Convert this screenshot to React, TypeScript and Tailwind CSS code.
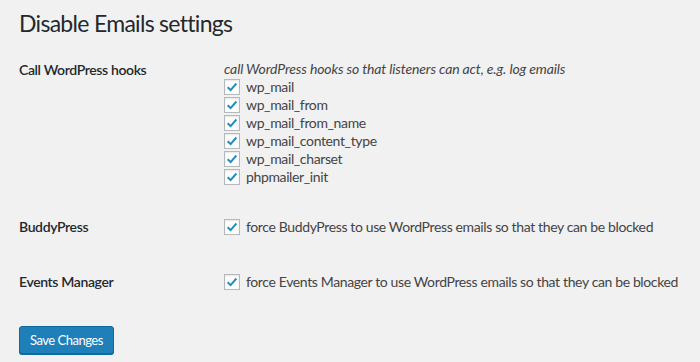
import type { ReactNode } from 'react'

const HOOKS = ['wp_mail', 'wp_mail_from', 'wp_mail_from_name', 'wp_mail_content_type', 'wp_mail_charset', 'phpmailer_init']

function Check() {
  return (
    <span className="w-4 h-4 shrink-0 border border-[#b4b9be] bg-[#fefefe] shadow-[inset_0_1px_2px_rgba(0,0,0,0.1)] flex items-center justify-center">
      <svg viewBox="0 0 16 16" className="w-[14px] h-[14px]">
        <path d="M3 8.3 L6.4 11.5 L13 4" fill="none" stroke="#1e8cbe" strokeWidth="2.2" />
      </svg>
    </span>
  )
}

function CheckRow({ children }: { children: ReactNode }) {
  return (
    <label className="flex items-center gap-[6px] h-[18px] whitespace-nowrap">
      <Check />
      <span>{children}</span>
    </label>
  )
}

function Row({ label, children, className }: { label: string; children: ReactNode; className?: string }) {
  return (
    <div className={'flex ' + (className ?? '')}>
      <div className="w-[205px] shrink-0 font-semibold text-[#23282d]">{label}</div>
      <div>{children}</div>
    </div>
  )
}

export default function App() {
  return (
    <div className="min-h-screen bg-[#f1f1f1] text-[#444] text-[14px] leading-[18px] tracking-[-0.37px] pl-[19px] pt-[9px]" style={{ fontFamily: 'Lato, "Open Sans", sans-serif' }}>
      <h1 className="text-[23px] leading-[29px] tracking-[-0.7px] text-[#23282d] font-normal">Disable Emails settings</h1>

      <Row label="Call WordPress hooks" className="mt-[23px]">
        <p className="italic -mt-[1px] tracking-[-0.14px] whitespace-nowrap">call WordPress hooks so that listeners can act, e.g. log emails</p>
        {HOOKS.map(h => <CheckRow key={h}>{h}</CheckRow>)}
      </Row>

      <Row label="BuddyPress" className="mt-[32px] items-center">
        <CheckRow>force BuddyPress to use WordPress emails so that they can be blocked</CheckRow>
      </Row>

      <Row label="Events Manager" className="mt-[37px] items-center">
        <CheckRow>force Events Manager to use WordPress emails so that they can be blocked</CheckRow>
      </Row>

      <button className="mt-[35px] h-[28px] px-[10px] rounded-[3px] bg-[#1f7fb8] border border-[#0f6a9e] shadow-[0_1px_0_#0f6a9e] text-white text-[13px] tracking-[-0.5px]">
        Save Changes
      </button>
    </div>
  )
}
